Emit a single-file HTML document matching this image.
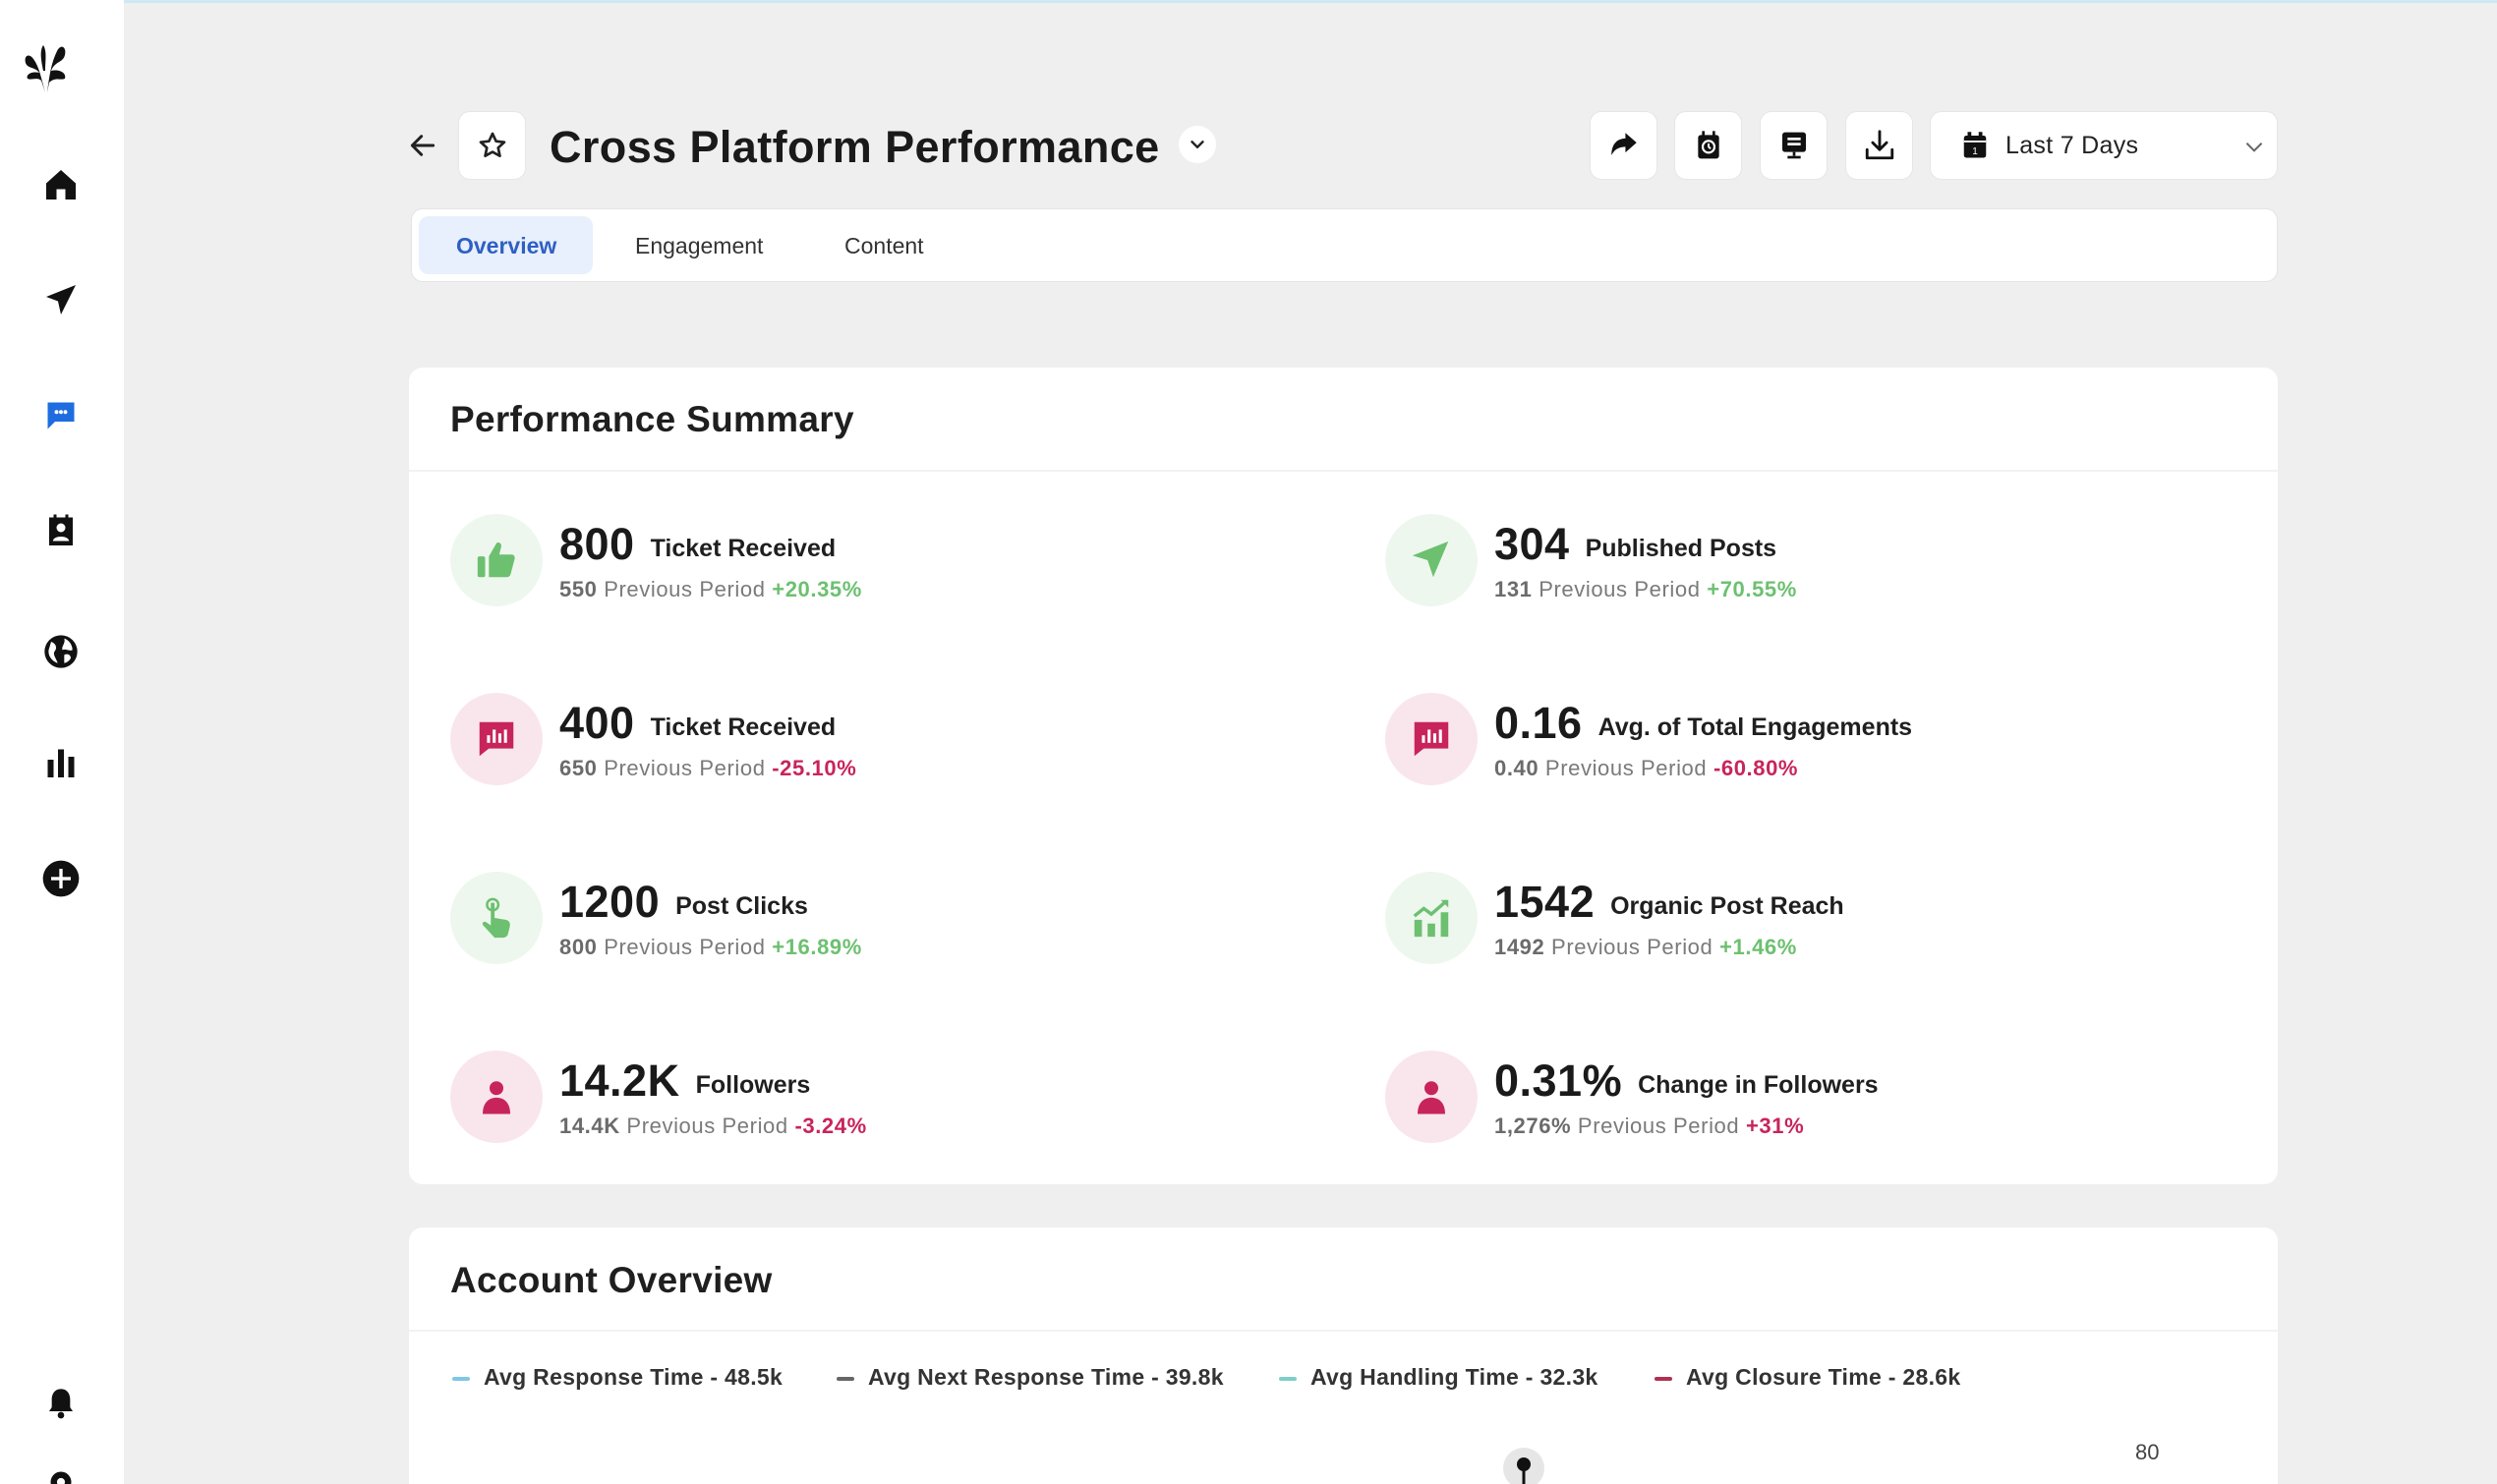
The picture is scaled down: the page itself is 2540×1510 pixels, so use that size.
<!DOCTYPE html>
<html style="overflow:hidden;width:2540px;height:1510px"><head><meta charset="utf-8"><style>
*{margin:0;padding:0;box-sizing:border-box}
body{width:2540px;height:1510px;background:#efefef;font-family:"Liberation Sans",sans-serif;position:relative;overflow:hidden;color:#1a1a1a}
.a{position:absolute}
.side{left:0;top:0;width:126px;height:1510px;background:#fff}
.btn{background:#fff;border-radius:12px;border:1px solid #e6e6e6;display:flex;align-items:center;justify-content:center}
.card{background:#fff;border-radius:14px}
.t{line-height:1;white-space:nowrap}
.ic{width:94px;height:94px;border-radius:50%;display:flex;align-items:center;justify-content:center}
.g{background:#eef7ee}.p{background:#f9e6ec}
.val{font-size:45px;font-weight:bold;color:#1a1a1a;letter-spacing:0.5px}
.lab{font-size:25px;font-weight:bold;margin-left:16px;color:#1f1f1f;position:relative;top:-3px}
.sub{font-size:22px;color:#7a7a7a;letter-spacing:0.6px}
.sub b{color:#6b6b6b}
.up{color:#6cc070;font-weight:bold}.dn{color:#c8245c;font-weight:bold}
.leg{font-size:23px;font-weight:bold;color:#333;letter-spacing:0.3px}
.dash{display:inline-block;width:18px;height:4px;border-radius:2px;vertical-align:middle;margin-right:14px}
</style></head><body>
<div class="a" style="left:0;top:0;width:2540px;height:3px;background:#cde9f2"></div>
<div class="a side">
<svg class="a" style="left:22px;top:42px" width="48" height="54" viewBox="0 0 48 54"><path d="M24 52 C20 38 18 26 12 18 C8 12 2 14 4 22 C6 28 14 26 18 32 C10 30 4 34 6 38 C10 40 16 36 20 40 Z M26 52 C28 36 30 22 36 10 C40 2 46 6 44 14 C42 22 34 20 30 30 C38 28 46 32 44 38 C40 40 34 36 28 42 Z M22 30 C20 20 18 10 22 4 C26 10 24 20 24 30Z" fill="#111"/></svg>
<svg class="a" style="left:44px;top:170px" width="36" height="36" viewBox="0 0 24 24"><path d="M12 2 L2 11 V22 H9 V15 H15 V22 H22 V11Z" fill="#111"/></svg>
<svg class="a" style="left:44px;top:287px" width="36" height="36" viewBox="0 0 24 24"><path d="M22 2 L2 10 L10 13 L12 22Z" fill="#111"/></svg>
<svg class="a" style="left:44px;top:405px" width="36" height="36" viewBox="0 0 24 24"><path d="M3 3 H21 V16 H8 L3 21Z" fill="#1e6de0"/><circle cx="9" cy="9.5" r="1.3" fill="#fff"/><circle cx="12" cy="9.5" r="1.3" fill="#fff"/><circle cx="15" cy="9.5" r="1.3" fill="#fff"/></svg>
<svg class="a" style="left:44px;top:521px" width="36" height="38" viewBox="0 0 24 24"><path d="M4 3 H20 V22 H4Z" fill="#111"/><rect x="7" y="1" width="2" height="4" fill="#111"/><rect x="15" y="1" width="2" height="4" fill="#111"/><circle cx="12" cy="10" r="3" fill="#fff"/><path d="M6.5 19 C7 15 17 15 17.5 19Z" fill="#fff"/></svg>
<svg class="a" style="left:42px;top:643px" width="40" height="40" viewBox="0 0 24 24"><circle cx="12" cy="12" r="10" fill="#111"/><path d="M6 6 C9 7 10 10 8 12 C7 14 9 16 10 19 C7 18 4 15 4.5 11Z M14 4 C17 5 19 8 19 11 C17 12 15 10 13 11 C12 9 15 7 14 4Z M14 14 C16 13 18 14 18 16 C17 18 15 19 14 19Z" fill="#fff"/></svg>
<svg class="a" style="left:44px;top:758px" width="36" height="36" viewBox="0 0 24 24"><rect x="3" y="10" width="4" height="12" fill="#111"/><rect x="10" y="3" width="4" height="19" fill="#111"/><rect x="17" y="8" width="4" height="14" fill="#111"/></svg>
<svg class="a" style="left:42px;top:874px" width="40" height="40" viewBox="0 0 24 24"><circle cx="12" cy="12" r="11" fill="#111"/><rect x="11" y="6" width="2" height="12" fill="#fff"/><rect x="6" y="11" width="12" height="2" fill="#fff"/></svg>
<svg class="a" style="left:46px;top:1410px" width="32" height="36" viewBox="0 0 24 26"><path d="M12 2 C7 2 5 6 5 10 V16 L3 19 H21 L19 16 V10 C19 6 17 2 12 2Z" fill="#111"/><circle cx="12" cy="22" r="2.5" fill="#111"/></svg>
<svg class="a" style="left:48px;top:1494px" width="28" height="28" viewBox="0 0 24 24"><circle cx="12" cy="12" r="9" fill="#111"/><circle cx="12" cy="12" r="3.5" fill="#fff"/></svg>
</div>

<svg class="a" style="left:414px;top:132px" width="32" height="32" viewBox="0 0 24 24"><path d="M20 12 H5 M11 5 L4 12 L11 19" stroke="#222" stroke-width="2.2" fill="none" stroke-linecap="round" stroke-linejoin="round"/></svg>
<div class="a btn" style="left:466px;top:113px;width:69px;height:70px"><svg width="32" height="32" viewBox="0 0 24 24"><path d="M12 3 L14.7 8.8 L21 9.5 L16.3 13.8 L17.6 20 L12 16.9 L6.4 20 L7.7 13.8 L3 9.5 L9.3 8.8Z" stroke="#222" stroke-width="2" fill="none" stroke-linejoin="round"/></svg></div>
<div class="a t" style="left:559px;top:127px;font-size:45px;font-weight:bold;color:#1a1a1a;letter-spacing:0.4px">Cross Platform Performance</div>
<div class="a" style="left:1199px;top:128px;width:38px;height:38px;border-radius:50%;background:#fff;display:flex;align-items:center;justify-content:center"><svg width="22" height="22" viewBox="0 0 24 24"><path d="M6 9 L12 15 L18 9" stroke="#222" stroke-width="2.6" fill="none" stroke-linecap="round" stroke-linejoin="round"/></svg></div>

<div class="a btn" style="left:1617px;top:113px;width:69px;height:70px"><svg width="34" height="34" viewBox="0 0 24 24"><path d="M21 10 L13 3 V7 C7 7 3 11 3 19 C5 15 8 13 13 13 V17Z" fill="#111"/></svg></div>
<div class="a btn" style="left:1703px;top:113px;width:69px;height:70px"><svg width="32" height="34" viewBox="0 0 24 24"><rect x="4" y="4" width="16" height="18" rx="2" fill="#111"/><rect x="7" y="1" width="2" height="4" fill="#111"/><rect x="15" y="1" width="2" height="4" fill="#111"/><circle cx="12" cy="13" r="4.5" fill="none" stroke="#fff" stroke-width="1.6"/><path d="M12 10.5 V13 L13.5 14.5" stroke="#fff" stroke-width="1.4" fill="none"/></svg></div>
<div class="a btn" style="left:1790px;top:113px;width:69px;height:70px"><svg width="32" height="34" viewBox="0 0 24 24"><rect x="3" y="2" width="18" height="15" rx="2" fill="#111"/><rect x="7" y="6" width="10" height="2" fill="#fff"/><rect x="7" y="10" width="10" height="2" fill="#fff"/><rect x="11" y="17" width="2" height="3" fill="#111"/><rect x="7" y="20" width="10" height="2" fill="#111"/></svg></div>
<div class="a btn" style="left:1877px;top:113px;width:69px;height:70px"><svg width="34" height="34" viewBox="0 0 24 24"><path d="M12 2 V15 M7 10 L12 15 L17 10 M3 15 V21 H21 V15" stroke="#111" stroke-width="2" fill="none" stroke-linecap="round" stroke-linejoin="round"/></svg></div>
<div class="a btn" style="left:1963px;top:113px;width:354px;height:70px;justify-content:flex-start;padding-left:30px">
<svg width="30" height="32" viewBox="0 0 24 24"><rect x="3" y="4" width="18" height="18" rx="2" fill="#111"/><rect x="6" y="1" width="3" height="5" fill="#111"/><rect x="15" y="1" width="3" height="5" fill="#111"/><rect x="3" y="8" width="18" height="1.5" fill="#fff"/><text x="12" y="19" font-size="8" fill="#fff" text-anchor="middle" font-family="Liberation Sans">1</text></svg>
<span class="t" style="font-size:25px;color:#222;margin-left:16px;letter-spacing:0.3px">Last 7 Days</span>
<svg class="a" style="left:316px;top:22px" width="26" height="26" viewBox="0 0 24 24"><path d="M5 9 L12 16 L19 9" stroke="#666" stroke-width="1.8" fill="none"/></svg>
</div>

<div class="a" style="left:418px;top:212px;width:1899px;height:75px;background:#fff;border-radius:12px;border:1px solid #e4e4e4"></div>
<div class="a" style="left:426px;top:220px;width:177px;height:59px;background:#e8f0fd;border-radius:10px"></div>
<div class="a t" style="left:464px;top:239px;font-size:23px;color:#2f5fc4;font-weight:bold">Overview</div>
<div class="a t" style="left:646px;top:239px;font-size:23px;color:#333">Engagement</div>
<div class="a t" style="left:859px;top:239px;font-size:23px;color:#333">Content</div>

<div class="a card" style="left:416px;top:374px;width:1901px;height:831px"></div>
<div class="a t" style="left:458px;top:408px;font-size:37px;font-weight:bold;color:#1f1f1f;letter-spacing:0.3px">Performance Summary</div>
<div class="a" style="left:416px;top:478px;width:1901px;height:2px;background:#f2f2f2"></div>

<div class="a ic g" style="left:458px;top:523px"><svg width="46" height="46" viewBox="0 0 24 24"><rect x="2" y="10" width="4" height="11" rx="1" fill="#6cc070"/><path d="M8 10 L12 3 C13 2 15 3 14.5 5 L13.5 9 H20 C21.5 9 22 10.5 21.6 11.6 L19.5 19.5 C19.2 20.5 18.4 21 17.5 21 H8Z" fill="#6cc070"/></svg></div>
<div class="a t" style="left:569px;top:531px"><span class="val">800</span><span class="lab">Ticket Received</span></div>
<div class="a t sub" style="left:569px;top:589px"><b>550</b> Previous Period <span class="up">+20.35%</span></div>

<div class="a ic p" style="left:458px;top:705px"><svg width="46" height="46" viewBox="0 0 24 24"><path d="M3 3 H21 V17 H8 L3 21Z" fill="#c8245c"/><rect x="7" y="10" width="1.6" height="4" fill="#fff"/><rect x="10" y="7" width="1.6" height="7" fill="#fff"/><rect x="13" y="9" width="1.6" height="5" fill="#fff"/><rect x="16" y="7" width="1.6" height="7" fill="#fff"/></svg></div>
<div class="a t" style="left:569px;top:713px"><span class="val">400</span><span class="lab">Ticket Received</span></div>
<div class="a t sub" style="left:569px;top:771px"><b>650</b> Previous Period <span class="dn">-25.10%</span></div>

<div class="a ic g" style="left:458px;top:887px"><svg width="46" height="46" viewBox="0 0 24 24"><circle cx="10" cy="5" r="3" fill="none" stroke="#6cc070" stroke-width="1.3"/><path d="M9 4 H11 V12 L17 13 C19 13.5 19.5 15 19 17 L18 21 C17.5 22 16.5 22.5 15 22.5 H11 L5 16 C4 15 5 13.5 6.5 14.2 L9 16Z" fill="#6cc070"/></svg></div>
<div class="a t" style="left:569px;top:895px"><span class="val">1200</span><span class="lab">Post Clicks</span></div>
<div class="a t sub" style="left:569px;top:953px"><b>800</b> Previous Period <span class="up">+16.89%</span></div>

<div class="a ic p" style="left:458px;top:1069px"><svg width="42" height="42" viewBox="0 0 24 24"><circle cx="12" cy="7" r="4" fill="#c8245c"/><path d="M4 22 C4 15 8 12.5 12 12.5 C16 12.5 20 15 20 22Z" fill="#c8245c"/></svg></div>
<div class="a t" style="left:569px;top:1077px"><span class="val">14.2K</span><span class="lab">Followers</span></div>
<div class="a t sub" style="left:569px;top:1135px"><b>14.4K</b> Previous Period <span class="dn">-3.24%</span></div>

<div class="a ic g" style="left:1409px;top:523px"><svg width="46" height="46" viewBox="0 0 24 24"><path d="M21 2 L2 9.5 L10 12 L13 21Z" fill="#6cc070"/></svg></div>
<div class="a t" style="left:1520px;top:531px"><span class="val">304</span><span class="lab">Published Posts</span></div>
<div class="a t sub" style="left:1520px;top:589px"><b>131</b> Previous Period <span class="up">+70.55%</span></div>

<div class="a ic p" style="left:1409px;top:705px"><svg width="46" height="46" viewBox="0 0 24 24"><path d="M3 3 H21 V17 H8 L3 21Z" fill="#c8245c"/><rect x="7" y="10" width="1.6" height="4" fill="#fff"/><rect x="10" y="7" width="1.6" height="7" fill="#fff"/><rect x="13" y="9" width="1.6" height="5" fill="#fff"/><rect x="16" y="7" width="1.6" height="7" fill="#fff"/></svg></div>
<div class="a t" style="left:1520px;top:713px"><span class="val">0.16</span><span class="lab">Avg. of Total Engagements</span></div>
<div class="a t sub" style="left:1520px;top:771px"><b>0.40</b> Previous Period <span class="dn">-60.80%</span></div>

<div class="a ic g" style="left:1409px;top:887px"><svg width="46" height="46" viewBox="0 0 24 24"><rect x="3" y="13" width="4" height="9" fill="#6cc070"/><rect x="10" y="15" width="4" height="7" fill="#6cc070"/><rect x="17" y="9" width="4" height="13" fill="#6cc070"/><path d="M3 11 L8 7 L12 10 L20 3" stroke="#6cc070" stroke-width="1.8" fill="none"/><path d="M17 2.5 H21 V6.5Z" fill="#6cc070"/></svg></div>
<div class="a t" style="left:1520px;top:895px"><span class="val">1542</span><span class="lab">Organic Post Reach</span></div>
<div class="a t sub" style="left:1520px;top:953px"><b>1492</b> Previous Period <span class="up">+1.46%</span></div>

<div class="a ic p" style="left:1409px;top:1069px"><svg width="42" height="42" viewBox="0 0 24 24"><circle cx="12" cy="7" r="4" fill="#c8245c"/><path d="M4 22 C4 15 8 12.5 12 12.5 C16 12.5 20 15 20 22Z" fill="#c8245c"/></svg></div>
<div class="a t" style="left:1520px;top:1077px"><span class="val">0.31%</span><span class="lab">Change in Followers</span></div>
<div class="a t sub" style="left:1520px;top:1135px"><b>1,276%</b> Previous Period <span class="dn">+31%</span></div>

<div class="a card" style="left:416px;top:1249px;width:1901px;height:261px;border-radius:14px 14px 0 0"></div>
<div class="a t" style="left:458px;top:1284px;font-size:37px;font-weight:bold;color:#1f1f1f;letter-spacing:0.3px">Account Overview</div>
<div class="a" style="left:416px;top:1353px;width:1901px;height:2px;background:#f2f2f2"></div>
<div class="a t leg" style="left:460px;top:1390px"><span class="dash" style="background:#7ec8e3"></span>Avg Response Time - 48.5k</div>
<div class="a t leg" style="left:851px;top:1390px"><span class="dash" style="background:#666"></span>Avg Next Response Time - 39.8k</div>
<div class="a t leg" style="left:1301px;top:1390px"><span class="dash" style="background:#7dcfc8"></span>Avg Handling Time - 32.3k</div>
<div class="a t leg" style="left:1683px;top:1390px"><span class="dash" style="background:#b03050"></span>Avg Closure Time - 28.6k</div>
<div class="a t" style="left:2172px;top:1467px;font-size:22px;color:#444">80</div>
<div class="a" style="left:1529px;top:1473px;width:42px;height:42px;border-radius:50%;background:#e6e6e6"></div>
<svg class="a" style="left:1538px;top:1480px" width="24" height="30" viewBox="0 0 24 30"><circle cx="12" cy="10" r="7" fill="#111"/><rect x="10.5" y="15" width="3" height="15" fill="#111"/></svg>
</body></html>
